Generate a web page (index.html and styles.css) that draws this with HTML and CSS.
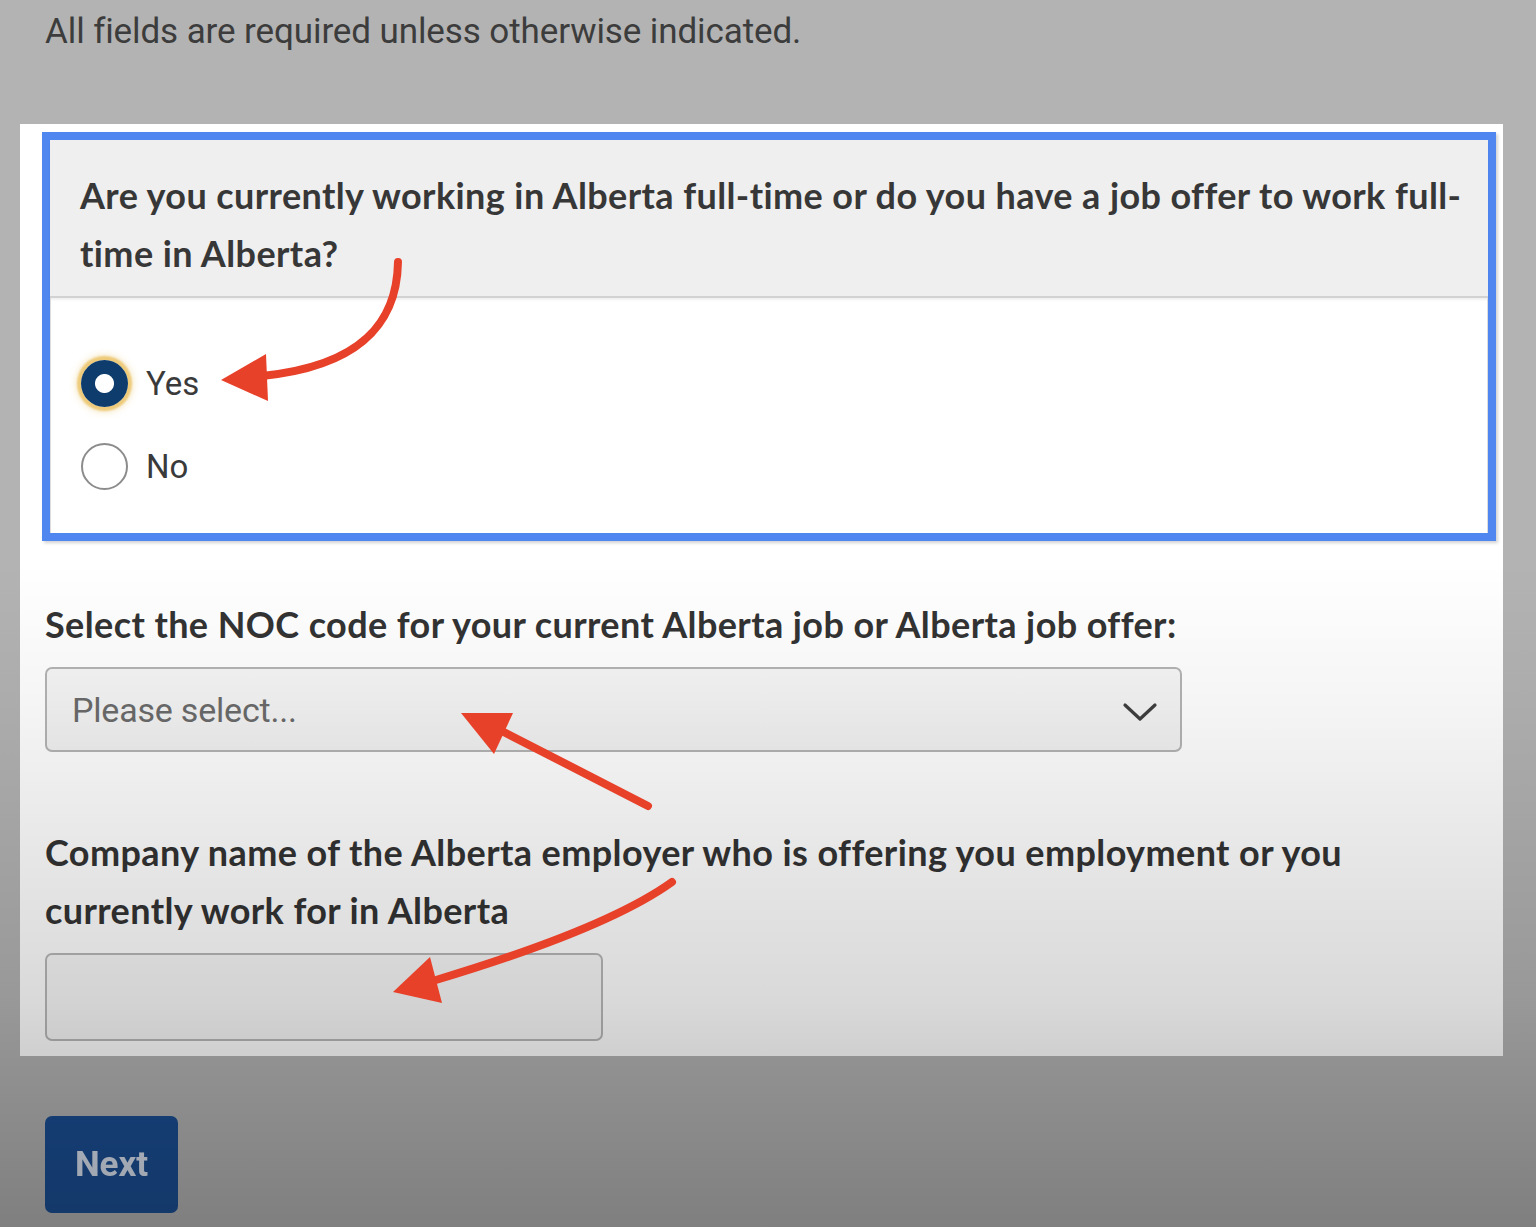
FILE: index.html
```html
<!DOCTYPE html>
<html lang="en">
<head>
<meta charset="utf-8">
<title>Eligibility questions</title>
<link rel="stylesheet" href="styles.css">
</head>
<body>
  <p class="note">All fields are required unless otherwise indicated.</p>

  <form class="panel">
    <fieldset class="question">
      <div class="question-head">Are you currently working in Alberta full-time or do you have a job offer to work full-time in Alberta?</div>
      <div class="options">
        <label class="option"><span class="radio radio-on"></span><span>Yes</span></label>
        <label class="option"><span class="radio"></span><span>No</span></label>
      </div>
    </fieldset>

    <div class="field field-noc">
      <div class="field-label">Select the NOC code for your current Alberta job or Alberta job offer:</div>
      <div class="select">
        <span class="placeholder">Please select...</span>
        <svg class="chevron" width="36" height="22" viewBox="0 0 36 22" aria-hidden="true">
          <path d="M3 4 L18 18 L33 4" fill="none" stroke="#3f3f3f" stroke-width="3.2" stroke-linecap="round" stroke-linejoin="round"/>
        </svg>
      </div>
    </div>

    <div class="field field-company">
      <div class="field-label">Company name of the Alberta employer who is offering you employment or you currently work for in Alberta</div>
      <div class="text-input"></div>
    </div>
  </form>

  <div class="actions">
    <button type="button" class="btn-next">Next</button>
  </div>

  <div class="shade"></div>

  <svg class="marks" width="1536" height="1227" viewBox="0 0 1536 1227" aria-hidden="true">
    <g fill="none" stroke="#e8412a" stroke-width="8" stroke-linecap="round">
      <path d="M398 262 C397 322 362 366 262 376"/>
      <path d="M648 806 L496 728"/>
      <path d="M672 882 C622 918 536 950 436 980"/>
    </g>
    <g fill="#e8412a">
      <polygon points="221,380 266,354 268,401"/>
      <polygon points="461,713 513,713 494,754"/>
      <polygon points="393,992 430,957 442,1003"/>
    </g>
  </svg>
</body>
</html>
```

FILE: styles.css
```css
html, body {
  margin: 0;
  padding: 0;
}

body {
  width: 1536px;
  min-height: 1227px;
  background: #b3b3b3;
  font-family: Roboto, "Liberation Sans", Arial, sans-serif;
  color: #333;
  position: relative;
  overflow: hidden;
}

.note {
  margin: 0;
  padding: 12px 0 0 45px;
  font-size: 35px;
  line-height: 40px;
  color: #3c3c3c;
  letter-spacing: -0.1px;
}

.panel {
  margin: 72px 0 0 20px;
  width: 1483px;
  background: #fff;
  padding: 8px 0 15px 0;
  box-sizing: border-box;
}

/* question group with focus outline */
.question {
  margin: 0 7px 0 22px;
  padding: 0;
  border: 8px solid #4f86f0;
  box-shadow: 2px 2px 3px rgba(0, 0, 0, 0.18);
  min-width: 0;
}

.question-head {
  background: #efefef;
  border-bottom: 2px solid #d2d2d2;
  box-shadow: 0 2px 2px rgba(0, 0, 0, 0.06);
  padding: 26px 18px 14px 30px;
  font-family: Lato, "Open Sans", sans-serif;
  font-weight: 700;
  font-size: 36px;
  letter-spacing: 0.4px;
  line-height: 58px;
  color: #373737;
}

.options {
  padding: 57px 0 39px 30px;
  display: flex;
  flex-direction: column;
  gap: 27px;
  border-left: 1px solid #dcdcdc;
  border-right: 1px solid #dcdcdc;
}

.option {
  display: flex;
  align-items: center;
  gap: 18px;
  height: 56px;
  font-size: 33px;
  color: #3a3a3a;
}

.radio {
  width: 47px;
  height: 47px;
  border-radius: 50%;
  border: 2px solid #8c8c8c;
  box-sizing: border-box;
  background: #fff;
  flex: none;
}

.radio-on {
  border: none;
  background: radial-gradient(circle, #fff 0 9px, #0e3d6d 10px);
  box-shadow: 0 0 2px 4px rgba(236, 196, 106, 0.85), 0 0 6px 6px rgba(240, 214, 150, 0.45);
}

.field {
  padding-left: 25px;
}

.field-noc {
  margin-top: 54px;
}

.field-company {
  margin-top: 71px;
}

.field-label {
  font-family: Lato, "Open Sans", sans-serif;
  font-weight: 700;
  font-size: 36px;
  letter-spacing: 0.4px;
  line-height: 58px;
  color: #333;
  max-width: 1370px;
}

.select {
  margin-top: 14px;
  width: 1137px;
  height: 85px;
  box-sizing: border-box;
  border: 2px solid #b4b4b4;
  border-radius: 7px;
  background: linear-gradient(#f6f6f6, #f1f1f1);
  display: flex;
  align-items: center;
  justify-content: space-between;
  padding: 0 22px 0 25px;
}

.placeholder {
  font-size: 34px;
  color: #6b6b6b;
  letter-spacing: -0.2px;
}

.chevron {
  display: block;
  margin-top: 4px;
}

.text-input {
  margin-top: 14px;
  width: 558px;
  height: 88px;
  box-sizing: border-box;
  border: 2px solid #b8b8b8;
  border-radius: 7px;
  background: #f8f8f8;
}

.actions {
  padding: 60px 0 0 45px;
}

.btn-next {
  width: 133px;
  height: 97px;
  border: none;
  border-radius: 7px;
  background: #1b4e93;
  color: #d9e2f0;
  font-family: Roboto, "Liberation Sans", sans-serif;
  font-weight: 700;
  font-size: 35px;
  padding: 0;
  filter: blur(0.6px);
}

/* lower part of the page darkens toward the bottom edge */
.shade {
  position: absolute;
  inset: 0;
  pointer-events: none;
  z-index: 1;
  background: linear-gradient(to bottom,
    rgba(0, 0, 0, 0) 0,
    rgba(0, 0, 0, 0) 560px,
    rgba(0, 0, 0, 0.04) 700px,
    rgba(0, 0, 0, 0.15) 1000px,
    rgba(0, 0, 0, 0.19) 1058px,
    rgba(0, 0, 0, 0.29) 1227px);
}

.marks {
  position: absolute;
  left: 0;
  top: 0;
  z-index: 2;
  pointer-events: none;
}
```
